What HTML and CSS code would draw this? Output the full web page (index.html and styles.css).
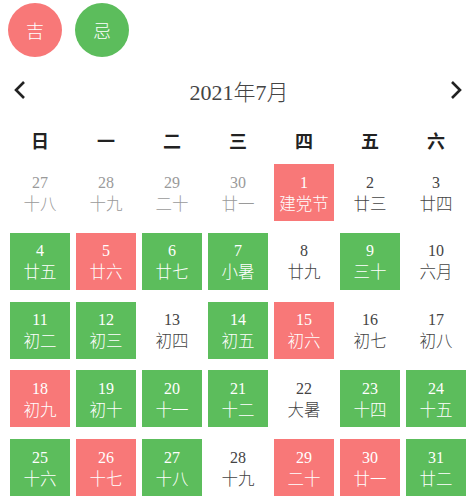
FILE: index.html
```html
<!DOCTYPE html>
<html lang="zh">
<head>
<meta charset="utf-8">
<link rel="stylesheet" href="styles.css">
</head>
<body>
<div class="legend">
  <div class="dot dot-good">吉</div>
  <div class="dot dot-bad">忌</div>
</div>
<div class="nav">
  <svg class="arrow" width="14" height="20" viewBox="0 0 14 20"><path d="M11 2 L3 10 L11 18" fill="none" stroke="#222" stroke-width="2.6"/></svg>
  <div class="title">2021年7月</div>
  <svg class="arrow" width="14" height="20" viewBox="0 0 14 20"><path d="M3 2 L11 10 L3 18" fill="none" stroke="#222" stroke-width="2.6"/></svg>
</div>
<div class="week">
  <span>日</span><span>一</span><span>二</span><span>三</span><span>四</span><span>五</span><span>六</span>
</div>
<div class="grid">
  <div class="cell other"><b>27</b><i>十八</i></div>
  <div class="cell other"><b>28</b><i>十九</i></div>
  <div class="cell other"><b>29</b><i>二十</i></div>
  <div class="cell other"><b>30</b><i>廿一</i></div>
  <div class="cell bad"><b>1</b><i>建党节</i></div>
  <div class="cell"><b>2</b><i>廿三</i></div>
  <div class="cell"><b>3</b><i>廿四</i></div>

  <div class="cell good"><b>4</b><i>廿五</i></div>
  <div class="cell bad"><b>5</b><i>廿六</i></div>
  <div class="cell good"><b>6</b><i>廿七</i></div>
  <div class="cell good"><b>7</b><i>小暑</i></div>
  <div class="cell"><b>8</b><i>廿九</i></div>
  <div class="cell good"><b>9</b><i>三十</i></div>
  <div class="cell"><b>10</b><i>六月</i></div>

  <div class="cell good"><b>11</b><i>初二</i></div>
  <div class="cell good"><b>12</b><i>初三</i></div>
  <div class="cell"><b>13</b><i>初四</i></div>
  <div class="cell good"><b>14</b><i>初五</i></div>
  <div class="cell bad"><b>15</b><i>初六</i></div>
  <div class="cell"><b>16</b><i>初七</i></div>
  <div class="cell"><b>17</b><i>初八</i></div>

  <div class="cell bad"><b>18</b><i>初九</i></div>
  <div class="cell good"><b>19</b><i>初十</i></div>
  <div class="cell good"><b>20</b><i>十一</i></div>
  <div class="cell good"><b>21</b><i>十二</i></div>
  <div class="cell"><b>22</b><i>大暑</i></div>
  <div class="cell good"><b>23</b><i>十四</i></div>
  <div class="cell good"><b>24</b><i>十五</i></div>

  <div class="cell good"><b>25</b><i>十六</i></div>
  <div class="cell bad"><b>26</b><i>十七</i></div>
  <div class="cell good"><b>27</b><i>十八</i></div>
  <div class="cell"><b>28</b><i>十九</i></div>
  <div class="cell bad"><b>29</b><i>二十</i></div>
  <div class="cell bad"><b>30</b><i>廿一</i></div>
  <div class="cell good"><b>31</b><i>廿二</i></div>
</div>
</body>
</html>
```
FILE: styles.css
```css
body {
  margin: 0;
  background: #fff;
  font-family: "Liberation Serif", "Noto Sans CJK SC", serif;
  color: #333;
}
.legend {
  display: flex;
  gap: 13px;
  padding: 3px 0 0 8px;
  height: 67px;
  box-sizing: border-box;
}
.dot {
  width: 54px;
  height: 54px;
  border-radius: 50%;
  color: #fff;
  font-family: "Noto Sans CJK SC", sans-serif;
  font-weight: 300;
  font-size: 18px;
  display: flex;
  align-items: center;
  justify-content: center;
}
.dot-good { background: #f87878; }
.dot-bad { background: #5cbd5c; }
.nav {
  display: flex;
  align-items: center;
  justify-content: space-between;
  height: 46px;
  padding: 0 12px 2px 13px;
}
.title {
  font-size: 22px;
  color: #444;
  font-family: "Liberation Serif", "Noto Sans CJK SC", serif;
  margin-left: 2px;
}
.title, .cell i { font-weight: 300; }
.week {
  display: grid;
  grid-template-columns: repeat(7, 60px);
  column-gap: 6px;
  padding: 0 0 0 10px;
  height: 49px;
  align-items: center;
  font-family: "Noto Sans CJK SC", sans-serif;
  font-weight: bold;
  font-size: 18px;
  color: #222;
}
.week span { text-align: center; }
.grid {
  display: grid;
  grid-template-columns: repeat(7, 60px);
  grid-auto-rows: 57px;
  column-gap: 6px;
  row-gap: 11.75px;
  padding: 0 0 0 10px;
}
.cell {
  display: flex;
  flex-direction: column;
  align-items: center;
  justify-content: center;
  color: #444;
}
.cell b {
  font-weight: normal;
  font-size: 16px;
  line-height: 20px;
  font-family: "Liberation Serif", serif;
}
.cell i {
  font-style: normal;
  font-size: 16.5px;
  line-height: 20px;
  font-family: "Noto Sans CJK SC", sans-serif;
}
.cell.other { color: #9a9a9a; }
.cell.good { background: #5cbd5c; color: #fff; }
.cell.bad { background: #f87878; color: #fff; }
```
